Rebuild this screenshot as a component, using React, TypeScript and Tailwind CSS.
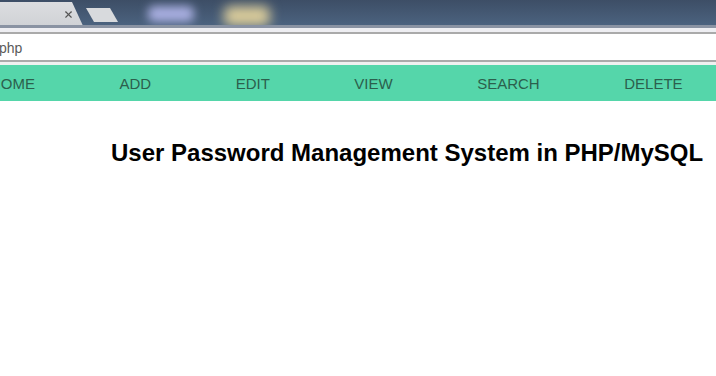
import { X } from "lucide-react"

const navItems = ["HOME", "ADD", "EDIT", "VIEW", "SEARCH", "DELETE"]

function App() {
  return (
    <div className="w-[716px] h-[376px] bg-white overflow-hidden font-['Liberation_Sans',Arial,sans-serif]">
      {/* browser chrome */}
      <div className="h-[28px] bg-gradient-to-b from-[#3d4e66] to-[#4d6582] flex items-end relative overflow-hidden">
        <div className="relative h-[26px] w-[88px] ml-[-4px] bg-gradient-to-b from-[#dcdde0] to-[#cfd1d5] [clip-path:polygon(0_0,76px_0,88px_100%,0_100%)] flex items-center">
          <X size={11} strokeWidth={2.5} className="ml-[67px] mb-[2px] text-[#555]" />
        </div>
        <div className="h-[14px] w-[32px] mb-[6px] ml-[2px] bg-[#d8dadd] [clip-path:polygon(0_0,24px_0,32px_100%,8px_100%)]" />
        <div className="w-[46px] h-[16px] mb-[6px] ml-[30px] rounded-md bg-[#a8aee0] blur-[5px]" />
        <div className="w-[46px] h-[20px] mb-[2px] ml-[30px] rounded-md bg-[#d9cb9a] blur-[6px]" />
        <div className="absolute left-0 right-0 bottom-0 h-[3px] bg-[#8a93a3]" />
      </div>
      <div className="h-[6px] bg-[#eeeef2] border-b-[2px] border-[#aaaaaa]" />
      {/* address bar */}
      <div className="h-[26px] bg-white flex items-center pt-[3px]">
        <span className="ml-[-1px] text-[14px] text-[#5a5a5a]">php</span>
      </div>
      <div className="h-[5px] bg-[#f0f0f0] border-t-[2px] border-[#aaaaaa]" />
      {/* nav */}
      <div className="h-[36px] bg-[#55d6aa] flex items-center pt-[3px]">
        <div className="flex gap-[84.5px] ml-[-10px] text-[15px] text-[#2c5f4d]">
          {navItems.map((n) => (
            <span key={n}>{n}</span>
          ))}
        </div>
      </div>
      <h1 className="mt-[40px] ml-[111px] text-[24px] font-bold text-black leading-none whitespace-nowrap">
        User Password Management System in PHP/MySQL
      </h1>
    </div>
  )
}

export default App
